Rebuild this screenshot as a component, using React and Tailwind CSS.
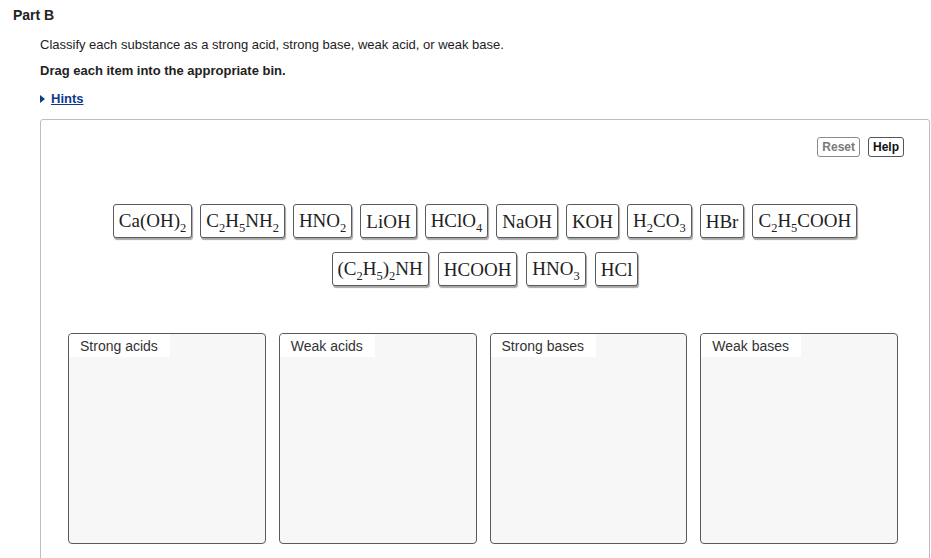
const ROW1 = [
  <>Ca(OH)<sub>2</sub></>,
  <>C<sub>2</sub>H<sub>5</sub>NH<sub>2</sub></>,
  <>HNO<sub>2</sub></>,
  <>LiOH</>,
  <>HClO<sub>4</sub></>,
  <>NaOH</>,
  <>KOH</>,
  <>H<sub>2</sub>CO<sub>3</sub></>,
  <>HBr</>,
  <>C<sub>2</sub>H<sub>5</sub>COOH</>,
]

const ROW2 = [
  <>(C<sub>2</sub>H<sub>5</sub>)<sub>2</sub>NH</>,
  <>HCOOH</>,
  <>HNO<sub>3</sub></>,
  <>HCl</>,
]

const BINS = ['Strong acids', 'Weak acids', 'Strong bases', 'Weak bases']

function Tile({ children }) {
  return (
    <div className="h-[34px] px-[5px] flex items-center bg-white border border-[#5a5a5a] rounded-[3px] shadow-[1px_2px_1px_rgba(0,0,0,0.35)] text-[19px] text-[#222] leading-none [&_sub]:text-[12.5px] [&_sub]:align-[-2px] [&_sub]:leading-none"
      style={{ fontFamily: '"Liberation Serif", "DejaVu Serif", serif' }}>
      <span>{children}</span>
    </div>
  )
}

export default function App() {
  return (
    <div className="w-[931px] h-[558px] overflow-hidden bg-white text-[#222]"
      style={{ fontFamily: '"Liberation Sans", Arial, sans-serif' }}>
      <p className="pl-[13px] pt-[7px] text-[14px] font-bold leading-[17px]">Part B</p>

      <div className="pl-[40px]">
        <p className="mt-[13px] text-[13px] leading-[16px]">Classify each substance as a strong acid, strong base, weak acid, or weak base.</p>
        <p className="mt-[10px] text-[13px] font-bold leading-[16px]">Drag each item into the appropriate bin.</p>
        <div className="mt-[12px] flex items-center gap-[6px] text-[13px] font-bold leading-[16px]">
          <svg width="5" height="8" viewBox="0 0 5 8"><path d="M0 0 L5 4 L0 8 Z" fill="#0c3a8c" /></svg>
          <span className="text-[#0c3a8c] underline">Hints</span>
        </div>

        <div className="mt-[12px] mr-[1px] h-[480px] border border-[#bdbdbd] rounded-[3px] relative">
          <div className="flex justify-end gap-[8px] pt-[17px] pr-[25px]">
            <button className="h-[20px] px-[4px] border border-[#8a8a8a] rounded-[3px] text-[12px] font-bold text-[#7a7a7a] leading-none">Reset</button>
            <button className="h-[20px] px-[4px] border border-[#555] rounded-[3px] text-[12px] font-bold text-[#111] leading-none">Help</button>
          </div>

          <div className="mt-[47px] flex flex-col items-center gap-[14px]">
            <div className="flex gap-[8px]">
              {ROW1.map((c, i) => <Tile key={i}>{c}</Tile>)}
            </div>
            <div className="flex gap-[9px]">
              {ROW2.map((c, i) => <Tile key={i}>{c}</Tile>)}
            </div>
          </div>

          <div className="mt-[47px] ml-[27px] mr-[31px] grid grid-cols-4 gap-[13px]">
            {BINS.map(b => (
              <div key={b} className="h-[211px] bg-[#f7f7f7] border border-[#5a5a5a] rounded-[4px]">
                <div className="inline-block bg-white pl-[11px] pr-[12px] pt-[4px] pb-[3px] rounded-tl-[4px] text-[14px] text-[#333] leading-[16px]">{b}</div>
              </div>
            ))}
          </div>
        </div>
      </div>
    </div>
  )
}
